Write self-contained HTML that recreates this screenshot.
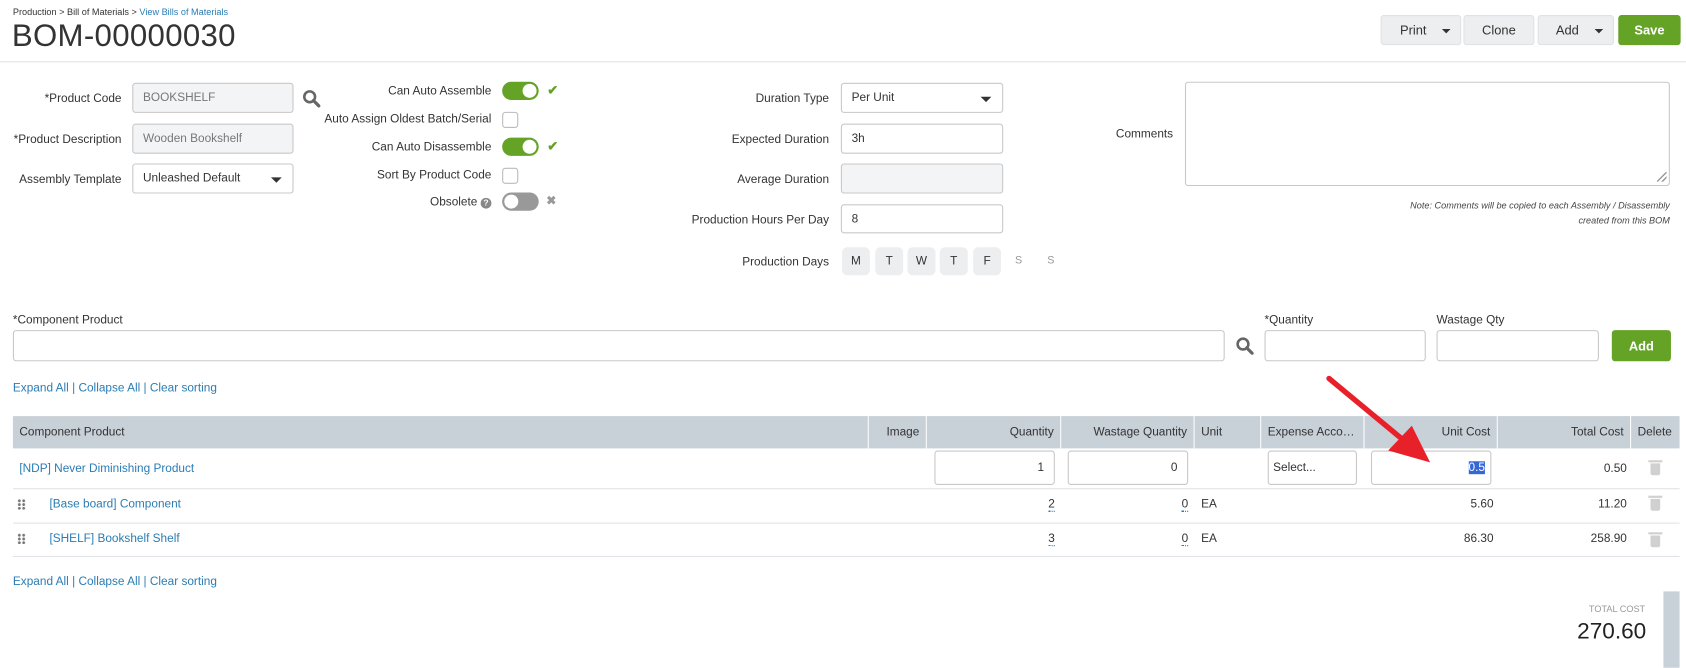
<!DOCTYPE html>
<html><head><meta charset="utf-8"><style>
*{box-sizing:border-box;margin:0;padding:0}
html,body{width:1686px;height:668px;overflow:hidden;background:#fff}
#w{position:absolute;left:0;top:0;width:1568px;height:621px;transform:scale(1.07526);transform-origin:0 0;font-family:"Liberation Sans",Arial,sans-serif;font-size:11px;color:#333}
.a{position:absolute;white-space:nowrap}
.lbl{position:absolute;text-align:right;white-space:nowrap;line-height:14px}
.in{position:absolute;border:1px solid #c8c8c8;border-radius:3px;background:#fff;padding:0 9px;display:flex;align-items:center;font-size:11px;color:#333}
.ro{background:#f3f4f6;color:#777}
.caret{position:absolute;right:10px;top:12px;width:0;height:0;border-left:5px solid transparent;border-right:5px solid transparent;border-top:5px solid #333}
.tg{position:absolute;width:34px;height:17px;border-radius:9px;background:#65a327}
.tg::after{content:"";position:absolute;right:2px;top:2px;width:13px;height:13px;border-radius:50%;background:#fff}
.tg.off{background:#999}.tg.off::after{left:2px;right:auto}
.cb{position:absolute;width:15px;height:15px;border:1px solid #bbb;border-radius:3px;background:#fff}
.ck{position:absolute;color:#65a327;font-size:12px;font-weight:bold}
.btn{position:absolute;background:#eceef0;border:1px solid #dfe2e5;border-radius:3px;font-size:12px;color:#333;display:flex;align-items:center;justify-content:center}
.day{position:absolute;top:230px;width:26px;height:26px;border-radius:5px;background:#eceef0;font-size:11px;display:flex;align-items:center;justify-content:center;color:#333}
.lnk{color:#2a7db4}
.th{position:absolute;top:387px;height:30px;background:#c8d0d8;line-height:30px;padding:0 6px;font-size:11px;color:#333;border-right:1px solid #fff;white-space:nowrap;overflow:hidden}
.hr{position:absolute;left:12px;width:1550px;height:1px;background:#dfe3e7}
.r{position:absolute;text-align:right;white-space:nowrap}
.dot{border-bottom:1px dotted #2a7db4}
.trash{position:absolute;width:9px;height:11px;background:#d0d0d0;border-radius:0 0 2px 2px}
.trash::before{content:"";position:absolute;left:-2px;top:-3px;width:13px;height:2px;background:#d0d0d0}
.grip{position:absolute;width:8px;height:10px;background:radial-gradient(circle,#777 1.2px,transparent 1.5px) 0 0/4px 3.5px}
</style></head><body><div id="w">
<div class="a" style="left:12px;top:6px;font-size:8.5px;color:#333">Production &gt; Bill of Materials &gt; <span class="lnk">View Bills of Materials</span></div>
<div class="a" style="left:11px;top:18px;font-size:29px;color:#333;letter-spacing:0.3px">BOM-00000030</div>
<div class="a" style="left:0;top:57px;width:1568px;height:1px;background:#e2e2e2"></div>
<div class="btn" style="left:1284px;top:14px;width:75px;height:28px;justify-content:flex-start;padding-left:17px">Print<span style="position:absolute;right:9px;top:12px;border-left:4px solid transparent;border-right:4px solid transparent;border-top:4px solid #333"></span></div>
<div class="btn" style="left:1361px;top:14px;width:66px;height:28px">Clone</div>
<div class="btn" style="left:1430px;top:14px;width:71px;height:28px;justify-content:flex-start;padding-left:16px">Add<span style="position:absolute;right:9px;top:12px;border-left:4px solid transparent;border-right:4px solid transparent;border-top:4px solid #333"></span></div>
<div class="btn" style="left:1505px;top:14px;width:58px;height:28px;background:#65a327;border-color:#65a327;color:#fff;font-weight:bold">Save</div>

<div class="lbl" style="right:1455px;top:85px">*Product Code</div>
<div class="in ro" style="left:123px;top:77px;width:150px;height:28px">BOOKSHELF</div>
<svg class="a" style="left:281px;top:83px" width="17" height="17" viewBox="0 0 17 17"><circle cx="7" cy="7" r="5" fill="none" stroke="#666" stroke-width="2.4"/><path d="M10.5 10.5L15.5 15.5" stroke="#666" stroke-width="3" stroke-linecap="round"/></svg>
<div class="lbl" style="right:1455px;top:123px">*Product Description</div>
<div class="in ro" style="left:123px;top:115px;width:150px;height:28px">Wooden Bookshelf</div>
<div class="lbl" style="right:1455px;top:160px">Assembly Template</div>
<div class="in" style="left:123px;top:152px;width:150px;height:28px">Unleashed Default<span class="caret"></span></div>

<div class="lbl" style="right:1111px;top:78px">Can Auto Assemble</div>
<div class="tg" style="left:467px;top:76px"></div><div class="ck" style="left:509px;top:77px">✔</div>
<div class="lbl" style="right:1111px;top:104px">Auto Assign Oldest Batch/Serial</div>
<div class="cb" style="left:467px;top:104px"></div>
<div class="lbl" style="right:1111px;top:130px">Can Auto Disassemble</div>
<div class="tg" style="left:467px;top:128px"></div><div class="ck" style="left:509px;top:129px">✔</div>
<div class="lbl" style="right:1111px;top:156px">Sort By Product Code</div>
<div class="cb" style="left:467px;top:156px"></div>
<div class="lbl" style="right:1111px;top:181px">Obsolete <span style="display:inline-block;width:10px;height:10px;border-radius:50%;background:#888;color:#fff;font-size:8px;line-height:10px;text-align:center;font-weight:bold">?</span></div>
<div class="tg off" style="left:467px;top:179px"></div><div class="a" style="left:508px;top:180px;color:#999;font-size:11px;font-weight:bold">✖</div>

<div class="lbl" style="right:797px;top:85px">Duration Type</div>
<div class="in" style="left:782px;top:77px;width:151px;height:28px">Per Unit<span class="caret"></span></div>
<div class="lbl" style="right:797px;top:123px">Expected Duration</div>
<div class="in" style="left:782px;top:115px;width:151px;height:28px">3h</div>
<div class="lbl" style="right:797px;top:160px">Average Duration</div>
<div class="in ro" style="left:782px;top:152px;width:151px;height:28px"></div>
<div class="lbl" style="right:797px;top:198px">Production Hours Per Day</div>
<div class="in" style="left:782px;top:190px;width:151px;height:27px">8</div>
<div class="lbl" style="right:797px;top:237px">Production Days</div>
<div class="day" style="left:783px">M</div><div class="day" style="left:814px">T</div><div class="day" style="left:844px">W</div><div class="day" style="left:874px">T</div><div class="day" style="left:905px">F</div>
<div class="a" style="left:944px;top:237px;font-size:10px;color:#999">S</div><div class="a" style="left:974px;top:237px;font-size:10px;color:#999">S</div>

<div class="lbl" style="right:477px;top:118px">Comments</div>
<div class="in" style="left:1102px;top:76px;width:451px;height:97px"></div>
<div class="a" style="left:1541px;top:160px;width:9px;height:9px;background:linear-gradient(135deg,transparent 45%,#999 45%,#999 55%,transparent 55%,transparent 70%,#999 70%,#999 80%,transparent 80%)"></div>
<div class="r" style="right:15px;top:184px;font-size:8.5px;font-style:italic;color:#444;line-height:14px">Note: Comments will be copied to each Assembly / Disassembly<br>created from this BOM</div>

<div class="a" style="left:12px;top:292px">*Component Product</div>
<div class="in" style="left:12px;top:307px;width:1127px;height:29px"></div>
<svg class="a" style="left:1149px;top:313px" width="17" height="17" viewBox="0 0 17 17"><circle cx="7" cy="7" r="5" fill="none" stroke="#666" stroke-width="2.4"/><path d="M10.5 10.5L15.5 15.5" stroke="#666" stroke-width="3" stroke-linecap="round"/></svg>
<div class="a" style="left:1176px;top:292px">*Quantity</div>
<div class="in" style="left:1176px;top:307px;width:150px;height:29px"></div>
<div class="a" style="left:1336px;top:292px">Wastage Qty</div>
<div class="in" style="left:1336px;top:307px;width:151px;height:29px"></div>
<div class="btn" style="left:1499px;top:307px;width:55px;height:29px;background:#65a327;border-color:#65a327;color:#fff;font-weight:bold">Add</div>

<div class="a lnk" style="left:12px;top:355px">Expand All | Collapse All | Clear sorting</div>

<div class="th" style="left:12px;width:796px">Component Product</div>
<div class="th" style="left:808px;width:54px;text-align:right">Image</div>
<div class="th" style="left:862px;width:125px;text-align:right">Quantity</div>
<div class="th" style="left:987px;width:124px;text-align:right">Wastage Quantity</div>
<div class="th" style="left:1111px;width:62px">Unit</div>
<div class="th" style="left:1173px;width:96px;text-overflow:ellipsis">Expense Account</div>
<div class="th" style="left:1269px;width:124px;text-align:right">Unit Cost</div>
<div class="th" style="left:1393px;width:124px;text-align:right">Total Cost</div>
<div class="th" style="left:1517px;width:45px;border-right:0">Delete</div>

<div class="a lnk" style="left:18px;top:430px">[NDP] Never Diminishing Product</div>
<div class="in" style="left:869px;top:419px;width:112px;height:32px;justify-content:flex-end">1</div>
<div class="in" style="left:993px;top:419px;width:112px;height:32px;justify-content:flex-end">0</div>
<div class="in" style="left:1179px;top:419px;width:83px;height:32px;padding:0 4px">Select...</div>
<div class="in" style="left:1275px;top:419px;width:112px;height:32px;justify-content:flex-end;padding-right:5px"><span style="background:#3566d6;color:#fff">0.5</span></div>
<div class="r" style="right:55px;top:430px">0.50</div>
<div class="trash" style="left:1535px;top:431px"></div>
<div class="hr" style="top:454px"></div>

<div class="grip" style="left:16px;top:464px"></div>
<div class="a lnk" style="left:46px;top:463px">[Base board] Component</div>
<div class="r" style="right:587px;top:463px"><span class="dot">2</span></div>
<div class="r" style="right:463px;top:463px"><span class="dot">0</span></div>
<div class="a" style="left:1117px;top:463px">EA</div>
<div class="r" style="right:179px;top:463px">5.60</div>
<div class="r" style="right:55px;top:463px">11.20</div>
<div class="trash" style="left:1535px;top:464px"></div>
<div class="hr" style="top:486px"></div>

<div class="grip" style="left:16px;top:496px"></div>
<div class="a lnk" style="left:46px;top:495px">[SHELF] Bookshelf Shelf</div>
<div class="r" style="right:587px;top:495px"><span class="dot">3</span></div>
<div class="r" style="right:463px;top:495px"><span class="dot">0</span></div>
<div class="a" style="left:1117px;top:495px">EA</div>
<div class="r" style="right:179px;top:495px">86.30</div>
<div class="r" style="right:55px;top:495px">258.90</div>
<div class="trash" style="left:1535px;top:498px"></div>
<div class="hr" style="top:517px"></div>

<div class="a lnk" style="left:12px;top:535px">Expand All | Collapse All | Clear sorting</div>
<div class="r" style="right:38px;top:561px;font-size:8.5px;color:#999">TOTAL COST</div>
<div class="r" style="right:37px;top:576px;font-size:21px;color:#222">270.60</div>
<div class="a" style="left:1547px;top:550px;width:15px;height:71px;background:#c8d0d8"></div>

<svg class="a" style="left:0;top:0" width="1568" height="621"><path d="M1236 352L1306 410" stroke="#e8202a" stroke-width="5" stroke-linecap="round"/><polygon points="1330,430 1291,419 1313,396" fill="#e8202a"/></svg>
</div></body></html>
